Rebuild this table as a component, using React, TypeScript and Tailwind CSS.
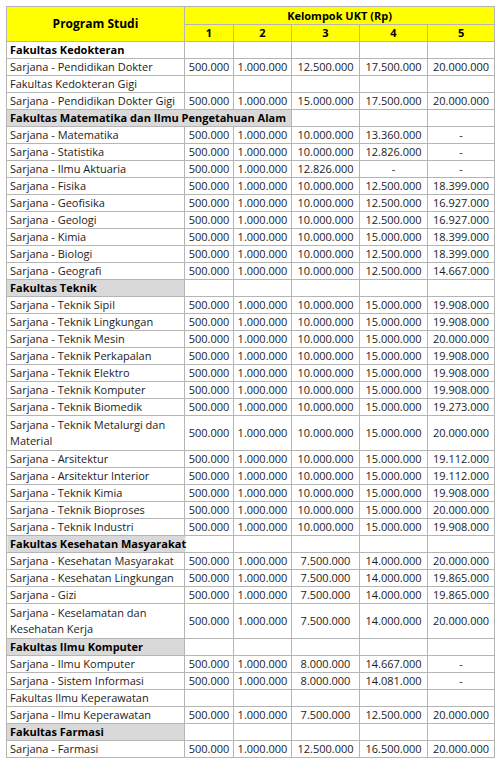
import React from 'react';

type Row = {
  name: string;
  vals?: string[];
  fac?: boolean;
  bold?: boolean;
  span?: number;
  fill?: string;
  tall?: boolean;
};

const base = ['500.000', '1.000.000'];

const rows: Row[] = [
  { name: 'Fakultas Kedokteran', fac: true, bold: true },
  { name: 'Sarjana - Pendidikan Dokter', vals: ['12.500.000', '17.500.000', '20.000.000'] },
  { name: 'Fakultas Kedokteran Gigi', fac: true },
  { name: 'Sarjana - Pendidikan Dokter Gigi', vals: ['15.000.000', '17.500.000', '20.000.000'] },
  { name: 'Fakultas Matematika dan Ilmu Pengetahuan Alam', fac: true, bold: true, span: 3, fill: 'bg-[#d9d9d9]' },
  { name: 'Sarjana - Matematika', vals: ['10.000.000', '13.360.000', '-'] },
  { name: 'Sarjana - Statistika', vals: ['10.000.000', '12.826.000', '-'] },
  { name: 'Sarjana - Ilmu Aktuaria', vals: ['12.826.000', '-', '-'] },
  { name: 'Sarjana - Fisika', vals: ['10.000.000', '12.500.000', '18.399.000'] },
  { name: 'Sarjana - Geofisika', vals: ['10.000.000', '12.500.000', '16.927.000'] },
  { name: 'Sarjana - Geologi', vals: ['10.000.000', '12.500.000', '16.927.000'] },
  { name: 'Sarjana - Kimia', vals: ['10.000.000', '15.000.000', '18.399.000'] },
  { name: 'Sarjana - Biologi', vals: ['10.000.000', '12.500.000', '18.399.000'] },
  { name: 'Sarjana - Geografi', vals: ['10.000.000', '12.500.000', '14.667.000'] },
  { name: 'Fakultas Teknik', fac: true, bold: true, fill: 'bg-[#d9d9d9]' },
  { name: 'Sarjana - Teknik Sipil', vals: ['10.000.000', '15.000.000', '19.908.000'] },
  { name: 'Sarjana - Teknik Lingkungan', vals: ['10.000.000', '15.000.000', '19.908.000'] },
  { name: 'Sarjana - Teknik Mesin', vals: ['10.000.000', '15.000.000', '20.000.000'] },
  { name: 'Sarjana - Teknik Perkapalan', vals: ['10.000.000', '15.000.000', '19.908.000'] },
  { name: 'Sarjana - Teknik Elektro', vals: ['10.000.000', '15.000.000', '19.908.000'] },
  { name: 'Sarjana - Teknik Komputer', vals: ['10.000.000', '15.000.000', '19.908.000'] },
  { name: 'Sarjana - Teknik Biomedik', vals: ['10.000.000', '15.000.000', '19.273.000'] },
  { name: 'Sarjana - Teknik Metalurgi dan\nMaterial', vals: ['10.000.000', '15.000.000', '20.000.000'], tall: true },
  { name: 'Sarjana - Arsitektur', vals: ['10.000.000', '15.000.000', '19.112.000'] },
  { name: 'Sarjana - Arsitektur Interior', vals: ['10.000.000', '15.000.000', '19.112.000'] },
  { name: 'Sarjana - Teknik Kimia', vals: ['10.000.000', '15.000.000', '19.908.000'] },
  { name: 'Sarjana - Teknik Bioproses', vals: ['10.000.000', '15.000.000', '20.000.000'] },
  { name: 'Sarjana - Teknik Industri', vals: ['10.000.000', '15.000.000', '19.908.000'] },
  {
    name: 'Fakultas Kesehatan Masyarakat',
    fac: true,
    bold: true,
    span: 2,
    fill: 'bg-[linear-gradient(to_right,#d9d9d9_178px,#ffffff_178px)]',
  },
  { name: 'Sarjana - Kesehatan Masyarakat', vals: ['7.500.000', '14.000.000', '20.000.000'] },
  { name: 'Sarjana - Kesehatan Lingkungan', vals: ['7.500.000', '14.000.000', '19.865.000'] },
  { name: 'Sarjana - Gizi', vals: ['7.500.000', '14.000.000', '19.865.000'] },
  { name: 'Sarjana - Keselamatan dan\nKesehatan Kerja', vals: ['7.500.000', '14.000.000', '20.000.000'], tall: true },
  { name: 'Fakultas Ilmu Komputer', fac: true, bold: true, fill: 'bg-[#d9d9d9]' },
  { name: 'Sarjana - Ilmu Komputer', vals: ['8.000.000', '14.667.000', '-'] },
  { name: 'Sarjana - Sistem Informasi', vals: ['8.000.000', '14.081.000', '-'] },
  { name: 'Fakultas Ilmu Keperawatan', fac: true },
  { name: 'Sarjana - Ilmu Keperawatan', vals: ['7.500.000', '12.500.000', '20.000.000'] },
  { name: 'Fakultas Farmasi', fac: true, bold: true, fill: 'bg-[#d9d9d9]' },
  { name: 'Sarjana - Farmasi', vals: ['12.500.000', '16.500.000', '20.000.000'] },
];

const cell = 'border border-[#b5b5b5] p-0';

export default function App() {
  return (
    <div className="bg-white p-[6px] font-['Open_Sans',sans-serif] text-[11px] leading-[16px] text-[#1c1c1c]">
      <table className="w-[488px] table-fixed border-collapse">
        <colgroup>
          <col className="w-[178px]" />
          <col className="w-[49px]" />
          <col className="w-[58px]" />
          <col className="w-[68px]" />
          <col className="w-[68px]" />
          <col className="w-[67px]" />
        </colgroup>
        <thead className="bg-[#ffff00] font-bold text-black">
          <tr className="h-[18px]">
            <th rowSpan={2} className={`${cell} text-center text-[12px]`}>
              Program Studi
            </th>
            <th colSpan={5} className={`${cell} text-center`}>
              Kelompok UKT (Rp)
            </th>
          </tr>
          <tr className="h-[17px]">
            {['1', '2', '3', '4', '5'].map((n) => (
              <th key={n} className={`${cell} text-center`}>
                {n}
              </th>
            ))}
          </tr>
        </thead>
        <tbody>
          {rows.map((r) => {
            if (r.fac) {
              const span = r.span ?? 1;
              return (
                <tr key={r.name} className="h-[17px]">
                  <td
                    colSpan={span}
                    className={`${cell} whitespace-nowrap px-[3px] text-left ${r.bold ? 'font-bold text-black' : ''} ${r.fill ?? ''}`}
                  >
                    {r.name}
                  </td>
                  {Array.from({ length: 6 - span }).map((_, i) => (
                    <td key={i} className={cell} />
                  ))}
                </tr>
              );
            }
            const vals = [...base, ...(r.vals ?? [])];
            return (
              <tr key={r.name} className={r.tall ? 'h-[35px]' : 'h-[17px]'}>
                <td className={`${cell} whitespace-pre px-[3px] text-left align-middle`}>{r.name}</td>
                {vals.map((v, i) => (
                  <td key={i} className={`${cell} whitespace-nowrap text-center align-middle`}>
                    {v}
                  </td>
                ))}
              </tr>
            );
          })}
        </tbody>
      </table>
    </div>
  );
}
